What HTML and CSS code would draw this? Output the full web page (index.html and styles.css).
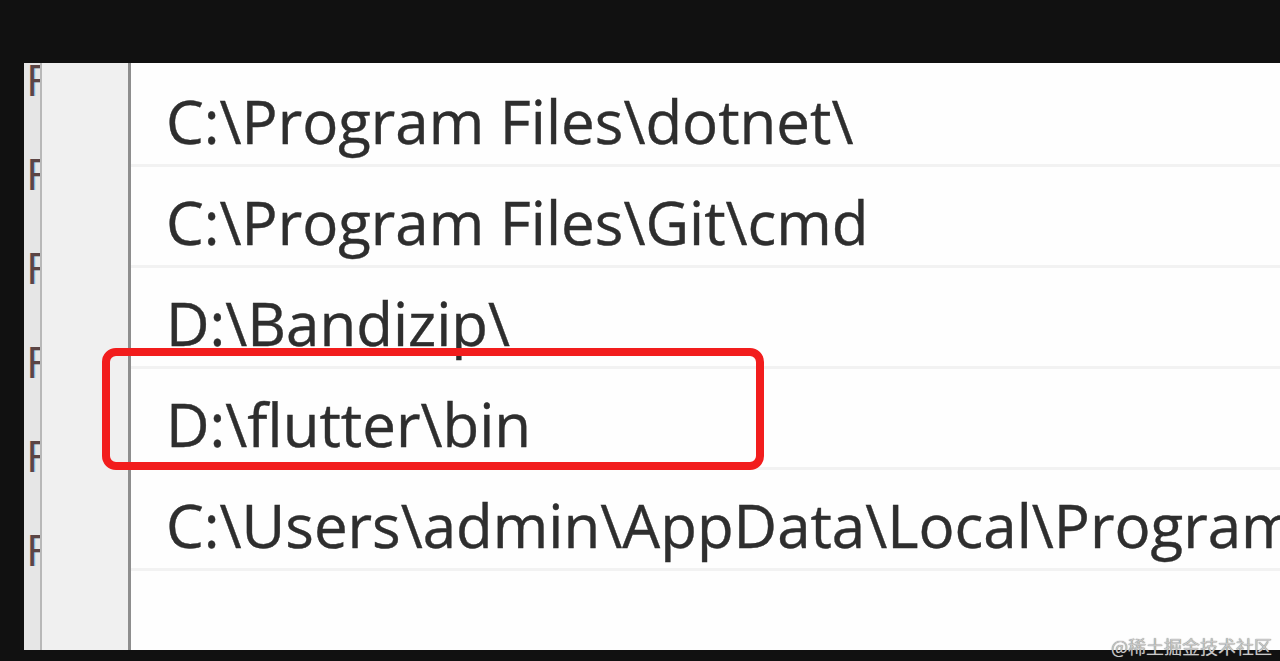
FILE: index.html
```html
<!DOCTYPE html>
<html>
<head>
<meta charset="utf-8">
<link rel="stylesheet" href="styles.css">
</head>
<body>
<div class="screen">
  <div class="panel">
    <div class="strip">
      <span class="f">F</span><span class="f">F</span><span class="f">F</span><span class="f">F</span><span class="f">F</span><span class="f">F</span>
    </div>
    <div class="gutter"></div>
    <div class="list">
      <div class="row">C:\Program Files\dotnet\</div>
      <div class="row">C:\Program Files\Git\cmd</div>
      <div class="row">D:\Bandizip\</div>
      <div class="row">D:\flutter\bin</div>
      <div class="row">C:\Users\admin\AppData\Local\Programs\Microsoft VS Code\bin</div>
    </div>
  </div>
  <div class="highlight"></div>
  <div class="watermark">@稀土掘金技术社区</div>
</div>
</body>
</html>
```
FILE: styles.css
```css
html, body {
  margin: 0;
  padding: 0;
  background: #111111;
  overflow: hidden;
}
.screen {
  position: relative;
  width: 1280px;
  height: 661px;
  background: #111111;
  padding: 63px 0 11px 24px;
  box-sizing: border-box;
}
.panel {
  display: flex;
  height: 100%;
  background: #fefefe;
  overflow: hidden;
}
.strip {
  width: 16px;
  flex: none;
  background: #e6e6e6;
  border-right: 2px solid #b8b8b8;
  overflow: hidden;
  display: flex;
  flex-direction: column;
}
.f {
  display: block;
  height: 98px;
  font-family: "Open Sans", "Noto Sans", sans-serif;
  font-size: 44px;
  line-height: 40px;
  color: #5b4545;
  margin-left: 2px;
  margin-top: -4px;
  text-shadow: 1px 0 0 #8fc3e0;
}
.gutter {
  width: 86px;
  flex: none;
  background: #f0f0f0;
  border-right: 3px solid #8e8e8e;
}
.list {
  flex: 1;
  display: flex;
  flex-direction: column;
  padding-top: 3px;
}
.row {
  height: 98px;
  flex: none;
  border-bottom: 3px solid #f2f2f2;
  font-family: "Open Sans", "Noto Sans", sans-serif;
  font-size: 60px;
  line-height: 110px;
  color: #2e2e2e;
  white-space: nowrap;
  padding-left: 35px;
  overflow: visible;
  -webkit-text-stroke: 0.4px #2e2e2e;
}
.highlight {
  position: absolute;
  left: 102px;
  top: 348px;
  width: 662px;
  height: 122px;
  box-sizing: border-box;
  border: 8px solid #f21d1d;
  border-radius: 14px;
}
.watermark {
  position: absolute;
  right: 8px;
  bottom: 3px;
  font-family: "Noto Sans CJK SC", sans-serif;
  font-size: 18px;
  line-height: 24px;
  color: #c8c8c8;
  text-shadow: 0 0 1px #555;
}
```
